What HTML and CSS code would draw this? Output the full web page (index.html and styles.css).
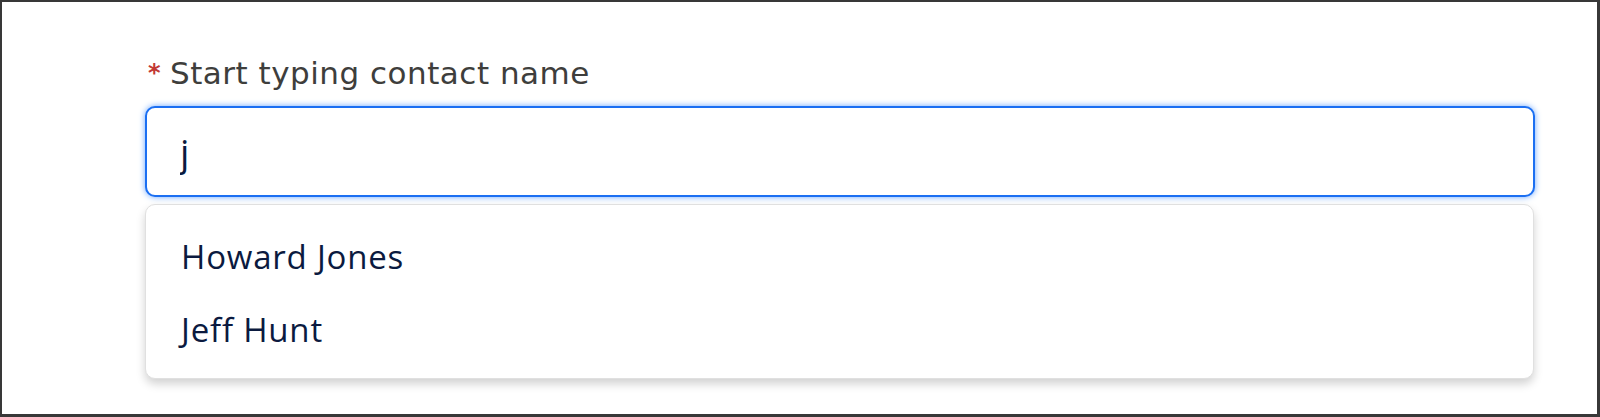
FILE: index.html
```html
<!DOCTYPE html>
<html lang="en">
<head>
  <meta charset="UTF-8" />
  <title>Contact lookup</title>
  <link rel="stylesheet" href="styles.css">
</head>
<body>
  <div class="frame">
    <div class="field">
      <label class="field-label" for="contact"><abbr class="required" title="required">*</abbr>Start typing contact name</label>
      <input id="contact" class="field-input" type="text" value="j" />
      <ul class="listbox">
        <li class="option">Howard Jones</li>
        <li class="option">Jeff Hunt</li>
      </ul>
    </div>
  </div>
</body>
</html>
```

FILE: styles.css
```css
html, body {
  margin: 0;
  padding: 0;
  background: #fff;
}
body {
  font-family: "Open Sans", "Noto Sans", sans-serif;
}
.frame {
  box-sizing: border-box;
  width: 1600px;
  height: 417px;
  border: 3px solid #383838;
  border-top-width: 2px;
  border-left-width: 2px;
  padding: 51px 0 0 143px;
}
.field {
  width: 1390px;
}
.field-label {
  display: block;
  font-family: "DejaVu Sans", sans-serif;
  font-size: 31px;
  line-height: 40px;
  letter-spacing: 0.5px;
  color: #3e3e3c;
  margin-bottom: 13px;
}
.required {
  display: inline-block;
  width: 22px;
  padding-left: 3px;
  color: #c23934;
  text-decoration: none;
  border: 0;
  font-size: 24px;
  font-weight: bold;
  vertical-align: top;
}
.field-input {
  box-sizing: border-box;
  display: block;
  width: 100%;
  height: 91px;
  padding: 0 33px;
  border: 2px solid #1b6ff2;
  border-radius: 10px;
  box-shadow: 0 0 6px #6aa6ff;
  font-family: inherit;
  font-size: 37px;
  color: #0b1a3f;
  outline: none;
}
.listbox {
  box-sizing: border-box;
  list-style: none;
  margin: 7px 0 0;
  padding: 15px 0 10px;
  width: 1389px;
  height: 175px;
  border: 1px solid #e0e0e0;
  border-radius: 10px;
  box-shadow: 0 5px 10px rgba(0, 0, 0, 0.18);
  background: #fff;
}
.option {
  padding: 0 35px;
  font-size: 33px;
  line-height: 73px;
  letter-spacing: 0.8px;
  color: #0b1a3f;
}
```
